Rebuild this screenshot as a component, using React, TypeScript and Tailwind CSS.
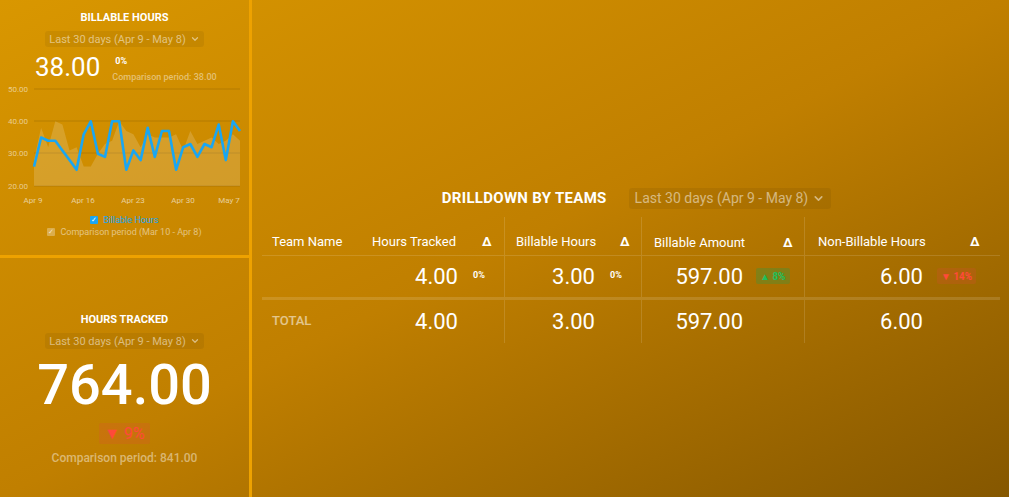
import { ChevronDown } from "lucide-react";

const blue = [26, 35, 34, 34, 31, 28, 25, 36, 40, 30, 29, 40, 40, 25, 31, 28, 38, 29, 37, 37, 25, 32, 33, 29, 33, 32, 39, 28, 40, 37];
const comp = [28, 38, 32, 40, 39, 31, 32, 26, 26, 30, 33, 34, 40, 37, 36, 32, 36, 35, 35, 35, 36, 31, 37, 33, 34, 35, 33, 34, 36, 34];

const px = (i: number) => 34 + (i * 206) / 29;
const py = (v: number) => 103 - (v - 20) * 3.233;

function Range({ big }: { big?: boolean }) {
  return (
    <div
      className={`flex items-center gap-1 rounded-[3px] bg-black/[0.06] leading-none text-white/50 ${
        big ? "h-[21px] px-[6px] text-[14px]" : "h-[16px] px-[4px] text-[11px]"
      }`}
    >
      <span>Last 30 days (Apr 9 - May 8)</span>
      <ChevronDown size={big ? 13 : 10} strokeWidth={3} />
    </div>
  );
}

function BillableChart() {
  const line = blue.map((v, i) => `${i ? "L" : "M"}${px(i).toFixed(1)},${py(v).toFixed(1)}`).join(" ");
  const area =
    `M34,103 ` + comp.map((v, i) => `L${px(i).toFixed(1)},${py(v).toFixed(1)}`).join(" ") + ` L240,103 Z`;
  const grid = [
    { v: "50.00", y: 6 },
    { v: "40.00", y: 38 },
    { v: "30.00", y: 70 },
    { v: "20.00", y: 103 },
  ];
  const xs = [
    { t: "Apr 9", x: 33 },
    { t: "Apr 16", x: 83 },
    { t: "Apr 23", x: 133 },
    { t: "Apr 30", x: 183 },
    { t: "May 7", x: 229 },
  ];
  return (
    <svg width="249" height="127" className="block">
      {grid.map((g) => (
        <g key={g.v}>
          <line x1="34" x2="240" y1={g.y} y2={g.y} stroke="rgba(0,0,0,0.13)" strokeWidth="1" />
          <text x="8" y={g.y + 3} fontSize="8" fill="rgba(255,255,255,0.55)">
            {g.v}
          </text>
        </g>
      ))}
      <path d={area} fill="rgba(255,255,255,0.16)" />
      <path d={line} fill="none" stroke="#1aa6f2" strokeWidth="2.6" strokeLinejoin="round" />
      {xs.map((x) => (
        <text key={x.t} x={x.x} y="120" fontSize="8" textAnchor="middle" fill="rgba(255,255,255,0.6)">
          {x.t}
        </text>
      ))}
    </svg>
  );
}

const cols = "grid-cols-[98px_105px_39px_96px_41px_104px_59px_126px_70px]";

function Badge({ kind, children }: { kind: "none" | "up" | "down"; children: React.ReactNode }) {
  if (kind === "none") return <span className="text-[9px] font-bold text-white">{children}</span>;
  return (
    <span
      className={`inline-flex h-[16px] items-center rounded-[2px] px-[4px] text-[10px] font-bold ${
        kind === "up" ? "bg-[#22a04a]/30 text-[#1fbf5c]" : "bg-[#e8483a]/20 text-[#ff4a3a]"
      }`}
    >
      {children}
    </span>
  );
}

export default function App() {
  const line = "border-white/[0.13]";
  const hd = `flex items-center whitespace-nowrap pt-[12px] text-[13px] text-white border-b ${line}`;
  const dt = `flex items-center border-b-[3px] ${line}`;
  const tt = "flex items-center";
  const val = "text-[22px] text-white";

  return (
    <div className="flex h-[497px] w-[1009px] overflow-hidden bg-linear-to-br from-[#d99700] via-[#c07f00] to-[#855700] font-['Roboto','Liberation_Sans',sans-serif]">
      <div className="flex w-[249px] flex-col">
        <div className="flex h-[255px] flex-col items-center pt-[11px]">
          <div className="text-[11px] leading-[14px] font-bold text-white">BILLABLE HOURS</div>
          <div className="mt-[6px] flex">
            <Range />
          </div>
          <div className="mt-[4px] flex h-[32px] w-full items-start pl-[35px]">
            <span className="text-[26px] leading-[32px] text-white">38.00</span>
            <div className="ml-[12px] mt-[4px] flex flex-col gap-[4px]">
              <span className="pl-[3px] text-[9px] leading-[12px] font-bold text-white">0%</span>
              <span className="text-[9px] leading-[12px] font-medium text-white/45">Comparison period: 38.00</span>
            </div>
          </div>
          <BillableChart />
          <div className="mt-[4px] flex flex-col items-center text-[9px] leading-[12px]">
            <div className="flex items-center gap-[5px] text-[#1aa6f2]">
              <span className="flex h-[8px] w-[8px] items-center justify-center rounded-[1px] bg-[#1aa6f2] text-[7px] leading-none text-white">✓</span>
              Billable Hours
            </div>
            <div className="flex items-center gap-[5px] text-white/50">
              <span className="flex h-[8px] w-[8px] items-center justify-center rounded-[1px] bg-white/30 text-[7px] leading-none text-white/70">✓</span>
              Comparison period (Mar 10 - Apr 8)
            </div>
          </div>
        </div>
        <div className="h-[3px] bg-[#eea200]" />
        <div className="flex flex-1 flex-col items-center pt-[55px]">
          <div className="text-[11px] leading-[14px] font-bold text-white">HOURS TRACKED</div>
          <div className="mt-[6px] flex">
            <Range />
          </div>
          <div className="mt-[4px] text-[56px] leading-[64px] font-medium text-white">764.00</div>
          <div className="mt-[6px] flex h-[21px] items-center rounded-[2px] bg-[#e8483a]/20 px-[5px] text-[16px] leading-none text-[#ff4a3a]">
            ▼ 9%
          </div>
          <div className="mt-[5px] text-[12px] font-medium text-white/45">Comparison period: 841.00</div>
        </div>
      </div>
      <div className="w-[3px] bg-[#eea200]" />
      <div className="flex flex-1 flex-col pt-[187px]">
        <div className="flex items-center justify-center gap-[22px] pl-[12px]">
          <span className="text-[15px] font-bold tracking-[0.3px] text-white">DRILLDOWN BY TEAMS</span>
          <Range big />
        </div>
        <div className={`ml-[10px] mt-[7px] grid w-[738px] ${cols} grid-rows-[39px_44px_43px]`}>
          <div className={`${hd} pl-[10px]`}>Team Name</div>
          <div className={`${hd} justify-end pr-[9px]`}>Hours Tracked</div>
          <div className={`${hd} pl-[17px] font-bold`}>Δ</div>
          <div className={`${hd} border-l pl-[11px]`}>Billable Hours</div>
          <div className={`${hd} pl-[20px] font-bold`}>Δ</div>
          <div className={`${hd} border-l pl-[12px] pt-[14px]`}>Billable Amount</div>
          <div className={`${hd} pl-[38px] pt-[14px] font-bold`}>Δ</div>
          <div className={`${hd} border-l pl-[13px]`}>Non-Billable Hours</div>
          <div className={`${hd} pl-[40px] font-bold`}>Δ</div>

          <div className={dt} />
          <div className={`${dt} justify-end pr-[7px] ${val}`}>4.00</div>
          <div className={`${dt} pl-[8px]`}>
            <Badge kind="none">0%</Badge>
          </div>
          <div className={`${dt} justify-end border-l pr-[5px] ${val}`}>3.00</div>
          <div className={`${dt} pl-[10px]`}>
            <Badge kind="none">0%</Badge>
          </div>
          <div className={`${dt} justify-end border-l pr-[2px] ${val}`}>597.00</div>
          <div className={`${dt} pl-[11px]`}>
            <Badge kind="up">▲ 8%</Badge>
          </div>
          <div className={`${dt} justify-end border-l pr-[7px] ${val}`}>6.00</div>
          <div className={`${dt} pl-[7px]`}>
            <Badge kind="down">▼ 14%</Badge>
          </div>

          <div className={`${tt} pl-[10px] text-[13px] font-medium text-white/55`}>TOTAL</div>
          <div className={`${tt} justify-end pr-[7px] ${val}`}>4.00</div>
          <div className={tt} />
          <div className={`${tt} justify-end border-l ${line} pr-[5px] ${val}`}>3.00</div>
          <div className={tt} />
          <div className={`${tt} justify-end border-l ${line} pr-[2px] ${val}`}>597.00</div>
          <div className={tt} />
          <div className={`${tt} justify-end border-l ${line} pr-[7px] ${val}`}>6.00</div>
          <div className={tt} />
        </div>
      </div>
    </div>
  );
}
